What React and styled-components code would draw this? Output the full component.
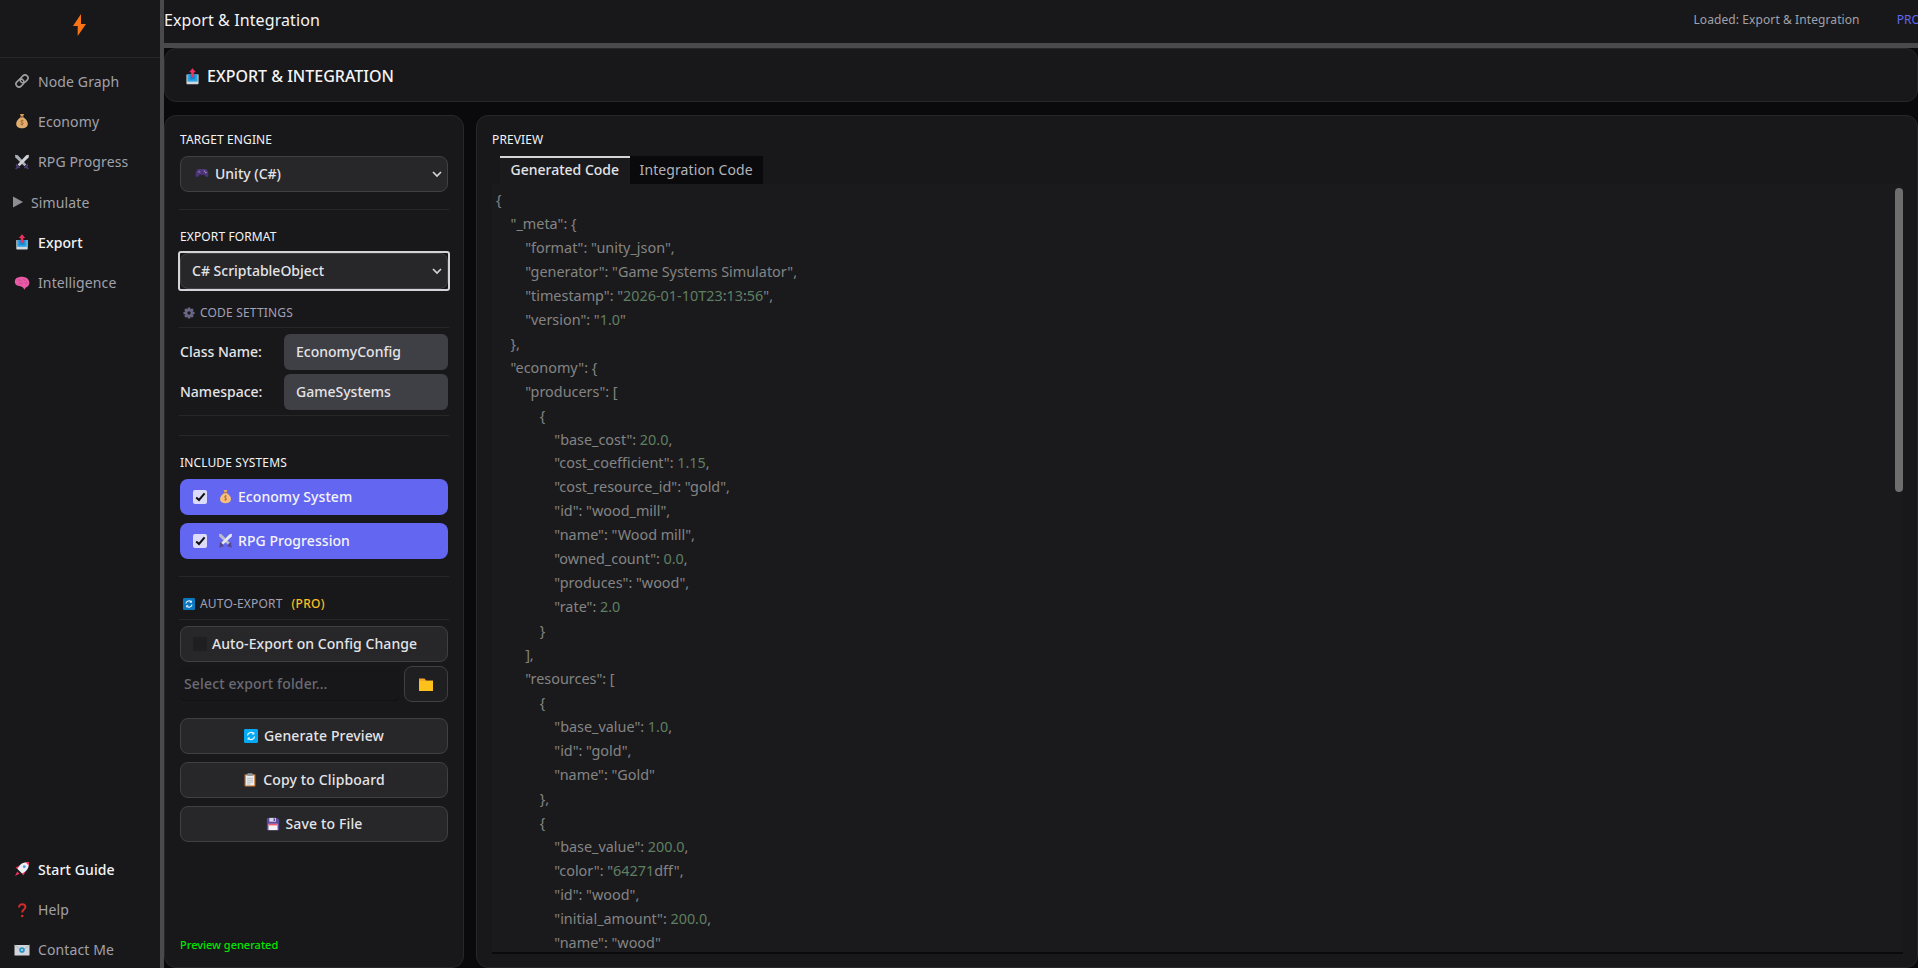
import React from "react";
import styled, { createGlobalStyle } from "styled-components";

const Global = createGlobalStyle`
  html, body { margin: 0; padding: 0; background: #0a0a0c; height: 100%; overflow: hidden; }
  body { font-family: "Noto Sans", "Liberation Sans", sans-serif; color: #e4e4e7; }
  * { box-sizing: border-box; }
`;

const Shell = styled.div`display: flex; width: 1918px; height: 968px; overflow: hidden;`;
const Sidebar = styled.aside`
  width: 164px; flex: none; display: flex; flex-direction: column;
  background: #18181b; border-right: 4px solid #4a4a4c;
`;
const Logo = styled.div`
  height: 58px; flex: none; display: flex; justify-content: center; padding-top: 14px;
  padding-right: 2px; border-bottom: 1px solid #27272a;
`;
const NavList = styled.nav`display: flex; flex-direction: column; padding-top: 3px;`;
const NavFoot = styled(NavList)`margin-top: auto; margin-bottom: -2px; padding-top: 0;`;
const NavItem = styled.a`
  height: 40.33px; display: flex; align-items: center; gap: 8px;
  padding-left: ${p => (p.$compact ? "13px" : "14px")};
  font-size: 14px; letter-spacing: .12px; color: ${p => (p.$active ? "#f4f4f5" : "#a1a1aa")};
  font-weight: ${p => (p.$active ? 500 : 400)};
  svg { opacity: ${p => (p.$active ? 1 : 0.9)}; flex: none; }
`;

const Main = styled.main`flex: 1; min-width: 0; display: flex; flex-direction: column; overflow: hidden;`;
const TopBar = styled.header`
  height: 48px; flex: none; display: flex; align-items: center; justify-content: space-between;
  background: #18181b; border-bottom: 5px solid #4a4a4c; padding-bottom: 4px;
`;
const TopTitle = styled.div`font-size: 16px; letter-spacing: .1px; color: #f4f4f5;`;
const TopStatus = styled.div`display: flex; gap: 37px; font-size: 12px; letter-spacing: .09px; color: #a1a1aa; margin-right: -3px;`;
const ProTag = styled.span`color: #6366f1;`;
const PageHead = styled.section`
  height: 54px; flex: none; display: flex; align-items: center; gap: 6px; padding: 2px 0 0 19px;
  background: #18181b; border: 1px solid #27272a; border-radius: 12px;
  font-size: 16px; font-weight: 500; color: #f4f4f5;
`;
const Columns = styled.div`flex: 1; min-height: 0; display: flex; gap: 12px; margin-top: 13px;`;
const Panel = styled.section`
  background: #18181b; border: 1px solid #27272a; border-radius: 12px; position: relative; overflow: hidden;
`;
const ControlPanel = styled(Panel)`width: 300px; flex: none; padding: 15px 15px 0; display: flex; flex-direction: column;`;
const PreviewPanel = styled(Panel)`flex: 1; min-width: 0; padding: 15px 14px 0 15px; display: flex; flex-direction: column;`;

const Label = styled.div`
  font-size: 12px; font-weight: 450; letter-spacing: .12px; line-height: 16px; padding-top: 1px; height: 16px; color: #f4f4f5;
  margin-top: ${p => p.$mt || 0}px; margin-bottom: ${p => p.$mb || 0}px;
`;
const SubLabel = styled.div`
  display: flex; align-items: center; gap: 5px; font-size: 12px; font-weight: 400; letter-spacing: .18px; line-height: 16px;
  color: #a1a1b5; margin-top: ${p => p.$mt || 0}px; padding-left: 3px;
`;
const ProMark = styled.span`color: #fbbf24; font-weight: 500; margin-left: 4px; font-size: 12px; letter-spacing: .3px;`;
const Divider = styled.hr`
  border: 0; height: 1px; background: #27272a; margin: ${p => p.$mt || 0}px -1px ${p => p.$mb || 0}px;
`;
const SelectBox = styled.div`
  height: 36px; display: flex; align-items: center; gap: 6px; padding: 0 0 2px ${p => (p.$focus ? "11px" : "14px")};
  background: #27272a; border: 1px solid #3f3f46; border-radius: 8px; font-size: 14px; font-weight: 500; color: #e4e4e7;
  position: relative;
  > svg:last-child { position: absolute; right: 5px; top: 12px; }
`;
const FocusRing = styled.div`margin: -2px; padding: 0; border: 2px solid #d4d4d8; border-radius: 3px;`;
const FieldRow = styled.label`
  display: flex; align-items: center; justify-content: space-between; font-size: 14px; font-weight: 500; color: #e4e4e7;
  margin-top: ${p => p.$mt || 0}px; line-height: 34px;
`;
const TextField = styled.input`
  width: 164px; height: 36px; border: 0; border-radius: 6px; background: #3f3f46; color: #e4e4e7;
  padding: 0 12px 2px; font: 500 14px "Noto Sans", sans-serif; outline: none;
`;
const ToggleButton = styled.button`
  height: 36px; display: flex; align-items: center; width: 100%; border-radius: 8px; cursor: pointer;
  padding: 0 0 2px ${p => (p.$on ? "13px" : "12px")}; gap: 5px;
  margin-top: ${p => p.$mt || 0}px;
  background: ${p => (p.$on ? "#6366f1" : "#27272a")};
  border: ${p => (p.$on ? "0" : "1px solid #3f3f46")};
  color: ${p => (p.$on ? "#f4f4f5" : "#e4e4e7")};
  font: 500 14px "Noto Sans", sans-serif; letter-spacing: .06px;
`;
const CheckBox = styled.span`
  width: 14px; height: 14px; flex: none; border-radius: 2px; display: flex; align-items: center; justify-content: center;
  background: ${p => (p.$on ? "#dcdcfa" : "#1f1f22")}; margin: 2px ${p => (p.$on ? "6px" : "0")} 0 0;
`;
const FolderRow = styled.div`display: flex; gap: 4px; margin-top: 4px;`;
const FolderInput = styled.input`
  width: 220px; height: 35px; border: 0; border-bottom: 1px solid #121214; border-radius: 6px;
  background: #17171a; padding: 0 4px; font: 500 14px "Noto Sans", sans-serif; letter-spacing: .15px; color: #e4e4e7; outline: none;
  &::placeholder { color: #6b6b73; opacity: 1; }
`;
const IconButton = styled.button`
  width: 44px; height: 36px; display: flex; align-items: center; justify-content: center;
  background: #1f1f22; border: 1px solid #3f3f46; border-radius: 8px; padding: 0;
`;
const ActionButton = styled.button`
  height: 36px; width: 100%; display: flex; align-items: center; justify-content: center; gap: 6px; padding: 0 0 2px;
  background: #27272a; border: 1px solid #3f3f46; border-radius: 8px; color: #e4e4e7;
  font: 500 14px "Noto Sans", sans-serif; letter-spacing: .14px; margin-top: ${p => p.$mt || 0}px;
  svg { margin-top: 2px; }
`;
const StatusText = styled.div`font-size: 11px; font-weight: 500; line-height: 14px; color: #00e600; margin-top: auto; margin-bottom: 15px;`;

const Tabs = styled.div`display: flex; margin: 9px 0 0 8px; flex: none;`;
const Tab = styled.div`
  height: 28px; display: flex; align-items: center; padding: 0 ${p => (p.$active ? "10.5px" : "10px")} 3px;
  font-size: 14px; font-weight: ${p => (p.$active ? 500 : 400)}; letter-spacing: ${p => (p.$active ? 0 : ".1px")};
  background: ${p => (p.$active ? "#1a1a1c" : "#0a0a0c")};
  color: ${p => (p.$active ? "#e4e4e7" : "#b4b4ba")};
  border-top: 2px solid ${p => (p.$active ? "#d4d4d8" : "#0a0a0c")};
`;
const CodeArea = styled.div`
  flex: none; height: 770px; background: #1a1a1c; border-bottom: 2px solid #0a0a0c; overflow: hidden;
  padding: 4px 0 0 4px; position: relative;
`;
const CodeText = styled.pre`
  margin: 0; font: 400 14.4px/23.95px "Noto Sans", sans-serif; word-spacing: -.1px; color: #848484;
`;
const Num = styled.span`color: #5f7f62;`;
const ScrollThumb = styled.div`position: absolute; right: 0; top: 4px; width: 8px; height: 304px; border-radius: 4px; background: #6e6e6e;`;

/* icons */
const Svg = ({ s = 16, w, h, children, vb = "0 0 16 16" }) => (
  <svg width={w || s} height={h || s} viewBox={vb} aria-hidden="true">{children}</svg>
);
const Bolt = () => <Svg w={13} h={22} vb="0 0 13 22"><polygon points="8,0 0,12 4.7,12 4.7,22 13,10 8,10" fill="#f97316" /></Svg>;
const Link = () => <Svg><g fill="none" stroke="#b0b0b4" strokeWidth="1.6" transform="rotate(-45 8 8)"><rect x="0.8" y="5" width="8.6" height="6" rx="3" /><rect x="6.6" y="5" width="8.6" height="6" rx="3" /></g></Svg>;
const Bag = ({ s }) => <Svg s={s}><path d="M6 1h4L9 3.600H7z" fill="#f0ad62" /><rect x="6.200" y="3.400" width="3.600" height="1.200" fill="#b97a3a" /><path d="M6.400 4.600C3.400 6.400 2 9 2.200 11.200 2.400 14 5 15.200 8 15.200s5.600-1.200 5.800-4C14 9 12.600 6.400 9.600 4.600z" fill="#f8bf7a" /><path d="M9.600 7.800c-.5-.6-2.600-.8-2.800.5-.2 1.400 2.600 1 2.500 2.400-.1 1.200-2.400 1-3 .3M8 6.600v6" fill="none" stroke="#b5742f" strokeWidth=".9" /></Svg>;
const Swords = ({ s }) => <Svg s={s}><polygon points="1,.8 3.800,1.200 12.400,10.400 10.400,12.200 1.400,3.600" fill="#b9bfc8" /><polygon points="15,.8 12.200,1.200 3.600,10.400 5.600,12.200 14.600,3.600" fill="#e4e7ec" /><path d="M2.400 9.800l3.800 4-1.200.8-1-.8-1.600 1.800-1.300-1.100 1.600-1.700-1-1.100zM13.600 9.800l-3.800 4 1.200.8 1-.8 1.600 1.800 1.300-1.100-1.600-1.700 1-1.100z" fill="#54427f" /></Svg>;
const Play = () => <Svg w={10} h={12} vb="0 0 10 12"><polygon points="0,0.500 10,6 0,11.500" fill="#9a9aa2" /></Svg>;
const Outbox = ({ s }) => <Svg s={s}><path d="M2.300 6h11.400v8.400c0 .6-.4 1-1 1H3.300c-.6 0-1-.4-1-1z" fill="#cfd8dd" /><path d="M3.200 6h9.600v6.800H3.200z" fill="#2aa3e6" /><path d="M5.400 6h5.200v4.800H5.400z" fill="#1a86c8" /><path d="M8 .3l3.200 3.800H9.300v4.600H6.700V4.100H4.800z" fill="#f0305f" /></Svg>;
const Brain = () => <Svg><path d="M5 2.200C3 2.200 1 3.800.8 6c-.3 2.400 1.200 4.400 3.400 4.800 1.600.3 3 .6 4.400 1.400.8.5 1.200 2.200 2.400 2.400-.2-1 .2-1.600 1-2.200 1.800-.8 3.400-2.200 3.400-4.600 0-3-2.600-5.600-5.600-5.800C8.200 1.800 6.400 1.800 5 2.200z" fill="#ff62b4" /><path d="M4 5.200c1.400-.6 2.600 0 3 1M9 4c1 0 2 .8 2 2M5 8.400c1.200.4 2.600 0 3.400-.8M11 8.600c1-.2 1.800-.8 2-1.800" fill="none" stroke="#d0438f" strokeWidth=".7" /></Svg>;
const Gear = () => <Svg s={12}><g fill="#6a6684"><circle cx="8" cy="8" r="5.400" /><rect x="6.200" y=".6" width="3.600" height="14.800" rx=".6" /><rect x="6.200" y=".6" width="3.600" height="14.800" rx=".6" transform="rotate(45 8 8)" /><rect x="6.200" y=".6" width="3.600" height="14.800" rx=".6" transform="rotate(90 8 8)" /><rect x="6.200" y=".6" width="3.600" height="14.800" rx=".6" transform="rotate(135 8 8)" /></g><circle cx="8" cy="8" r="2.200" fill="#18181b" /></Svg>;
const Pad = () => <Svg w={14} h={12} vb="0 3 16 10"><path d="M4 3.500h8c2 0 2.800 2.600 3.200 5 .3 2-.2 4-1.600 4-1.600 0-2-2.600-3.600-2.600H6C4.400 9.900 4 12.500 2.400 12.500 1 12.500.5 10.500.8 8.500 1.200 6.100 2 3.500 4 3.500z" fill="#4d3578" /><path d="M3.200 6.600h3M4.700 5.100v3" stroke="#7d6aa8" strokeWidth="1" /><circle cx="10.800" cy="5.800" r=".8" fill="#b8aad8" /><circle cx="12.400" cy="7.400" r=".8" fill="#b8aad8" /></Svg>;
const Sync = ({ s = 14, dim }) => <Svg s={s}><rect width="16" height="16" rx="1.500" fill={dim ? "#0a78bf" : "#03a9f4"} /><path d="M4 7.400A4 4 0 0 1 11 5.300M12 8.600A4 4 0 0 1 5 10.700" fill="none" stroke="#e6f4fb" strokeWidth="1.500" /><path d="M11.800 3v3.400H8.600zM4.200 13V9.600h3.200z" fill="#e6f4fb" /></Svg>;
const Folder = () => <Svg><path d="M1 2.500h5.500l1.500 2H15v2H1z" fill="#f5a623" /><path d="M1 5h14v9.400c0 .4-.2.600-.6.600H1.600c-.4 0-.6-.2-.6-.6z" fill="#fcc21b" /></Svg>;
const Clip = () => <Svg s={14}><rect x="1.800" y="1.400" width="12.400" height="14" rx="1" fill="#c97d3a" /><rect x="3.200" y="2.800" width="9.600" height="11.400" fill="#eceff1" /><rect x="5" y=".4" width="6" height="3" rx=".6" fill="#8d99a0" /><path d="M4.600 6h6.800M4.600 8.200h6.800M4.600 10.400h6.800M4.600 12.600h4" stroke="#a4adb2" strokeWidth=".9" /></Svg>;
const Floppy = () => <Svg s={14}><path d="M1 1h12l2 2v12H1z" fill="#5c4a9c" /><rect x="3.800" y="1" width="7.600" height="4.400" fill="#d7d4e6" /><rect x="8.600" y="1.600" width="1.800" height="3" fill="#5c4a9c" /><rect x="2.800" y="7.800" width="10.400" height="7.200" fill="#f2f2f5" /><rect x="2.800" y="7.800" width="10.400" height="1.800" fill="#ef5a70" /></Svg>;
const Rocket = () => <Svg><path d="M6 4C8.500 1.500 12 .8 15 1c.2 3-.5 6.500-3 9l-3.500 3L3 7.500z" fill="#eceff4" /><path d="M11.500 1.200l3.500-.2c.1 1.300 0 2.400-.2 3.600z" fill="#f0305f" /><circle cx="10.300" cy="5.700" r="1.400" fill="#4d9be0" /><path d="M5.800 4.300L1.500 6.500 3.200 8zM11.700 10.200L9.500 14.500 8 12.800zM3.200 10.500L1 15l4.500-2.200z" fill="#f0305f" /></Svg>;
const Question = () => <Svg><path d="M5 5.500c0-2 1.400-3.200 3.200-3.200 1.900 0 3.200 1.200 3.200 2.800 0 2.400-3.200 2.600-3.200 5.400" fill="none" stroke="#e82c2c" strokeWidth="2" /><circle cx="8.200" cy="14" r="1.300" fill="#e82c2c" /></Svg>;
const Mail = () => <Svg><rect x=".5" y="3" width="15" height="10.500" rx=".5" fill="#e6e9ed" /><path d="M.5 3L8 9l7.500-6" fill="none" stroke="#b4bac2" strokeWidth=".7" /><circle cx="8" cy="8" r="2.800" fill="#2aa3e6" /><circle cx="8" cy="8" r="1" fill="#e6e9ed" /></Svg>;
const Chevron = () => <svg width="10" height="10" viewBox="0 0 10 10" aria-hidden="true"><path d="M1 3l4 4 4-4" fill="none" stroke="#d4d4d8" strokeWidth="1.700" /></svg>;
const Tick = () => <svg width="11" height="10" viewBox="0 0 11 10" aria-hidden="true"><path d="M1.200 5.400L4 8l5.600-6.600" fill="none" stroke="#111" strokeWidth="2" /></svg>;

const CODE = `{
    "_meta": {
        "format": "unity_json",
        "generator": "Game Systems Simulator",
        "timestamp": "2026-01-10T23:13:56",
        "version": "1.0"
    },
    "economy": {
        "producers": [
            {
                "base_cost": 20.0,
                "cost_coefficient": 1.15,
                "cost_resource_id": "gold",
                "id": "wood_mill",
                "name": "Wood mill",
                "owned_count": 0.0,
                "produces": "wood",
                "rate": 2.0
            }
        ],
        "resources": [
            {
                "base_value": 1.0,
                "id": "gold",
                "name": "Gold"
            },
            {
                "base_value": 200.0,
                "color": "64271dff",
                "id": "wood",
                "initial_amount": 200.0,
                "name": "wood"`;

const highlight = src =>
  src.split(/(\d[\d.\-T]*\d|\d)/).map((part, i) => (i % 2 ? <Num key={i}>{part}</Num> : part));

const NAV = [
  { label: "Node Graph", icon: <Link /> },
  { label: "Economy", icon: <Bag /> },
  { label: "RPG Progress", icon: <Swords /> },
  { label: "Simulate", icon: <Play />, compact: true },
  { label: "Export", icon: <Outbox />, active: true },
  { label: "Intelligence", icon: <Brain /> },
];
const FOOT = [
  { label: "Start Guide", icon: <Rocket />, active: true },
  { label: "Help", icon: <Question /> },
  { label: "Contact Me", icon: <Mail /> },
];
const renderNav = n => (
  <NavItem key={n.label} $active={n.active} $compact={n.compact}>{n.icon}{n.label}</NavItem>
);

export default function App() {
  return (
    <>
      <Global />
      <Shell>
        <Sidebar>
          <Logo><Bolt /></Logo>
          <NavList>{NAV.map(renderNav)}</NavList>
          <NavFoot>{FOOT.map(renderNav)}</NavFoot>
        </Sidebar>
        <Main>
          <TopBar>
            <TopTitle>Export &amp; Integration</TopTitle>
            <TopStatus><span>Loaded: Export &amp; Integration</span><ProTag>PRO</ProTag></TopStatus>
          </TopBar>
          <PageHead><Outbox s={17} />EXPORT &amp; INTEGRATION</PageHead>
          <Columns>
            <ControlPanel>
              <Label $mb={9}>TARGET ENGINE</Label>
              <SelectBox><Pad />Unity (C#)<Chevron /></SelectBox>
              <Divider $mt={17} $mb={18} />
              <Label $mb={9}>EXPORT FORMAT</Label>
              <FocusRing><SelectBox $focus>C# ScriptableObject<Chevron /></SelectBox></FocusRing>
              <SubLabel $mt={16}><Gear />CODE SETTINGS</SubLabel>
              <Divider $mt={6} $mb={6} />
              <FieldRow>Class Name:<TextField readOnly value="EconomyConfig" /></FieldRow>
              <FieldRow $mt={4}>Namespace:<TextField readOnly value="GameSystems" /></FieldRow>
              <Divider $mt={5} $mb={19} />
              <Divider $mb={18} />
              <Label $mb={9}>INCLUDE SYSTEMS</Label>
              <ToggleButton $on><CheckBox $on><Tick /></CheckBox><Bag s={15} />Economy System</ToggleButton>
              <ToggleButton $on $mt={8}><CheckBox $on><Tick /></CheckBox><Swords s={15} />RPG Progression</ToggleButton>
              <Divider $mt={17} $mb={19} />
              <SubLabel><Sync s={12} dim />AUTO-EXPORT<ProMark>(PRO)</ProMark></SubLabel>
              <Divider $mt={7} $mb={6} />
              <ToggleButton><CheckBox />Auto-Export on Config Change</ToggleButton>
              <FolderRow>
                <FolderInput readOnly placeholder="Select export folder..." />
                <IconButton aria-label="Choose folder"><Folder /></IconButton>
              </FolderRow>
              <ActionButton $mt={16}><Sync />Generate Preview</ActionButton>
              <ActionButton $mt={8}><Clip />Copy to Clipboard</ActionButton>
              <ActionButton $mt={8}><Floppy />Save to File</ActionButton>
              <StatusText>Preview generated</StatusText>
            </ControlPanel>
            <PreviewPanel>
              <Label>PREVIEW</Label>
              <Tabs>
                <Tab $active>Generated Code</Tab>
                <Tab>Integration Code</Tab>
              </Tabs>
              <CodeArea>
                <CodeText>{highlight(CODE)}</CodeText>
                <ScrollThumb />
              </CodeArea>
            </PreviewPanel>
          </Columns>
        </Main>
      </Shell>
    </>
  );
}
